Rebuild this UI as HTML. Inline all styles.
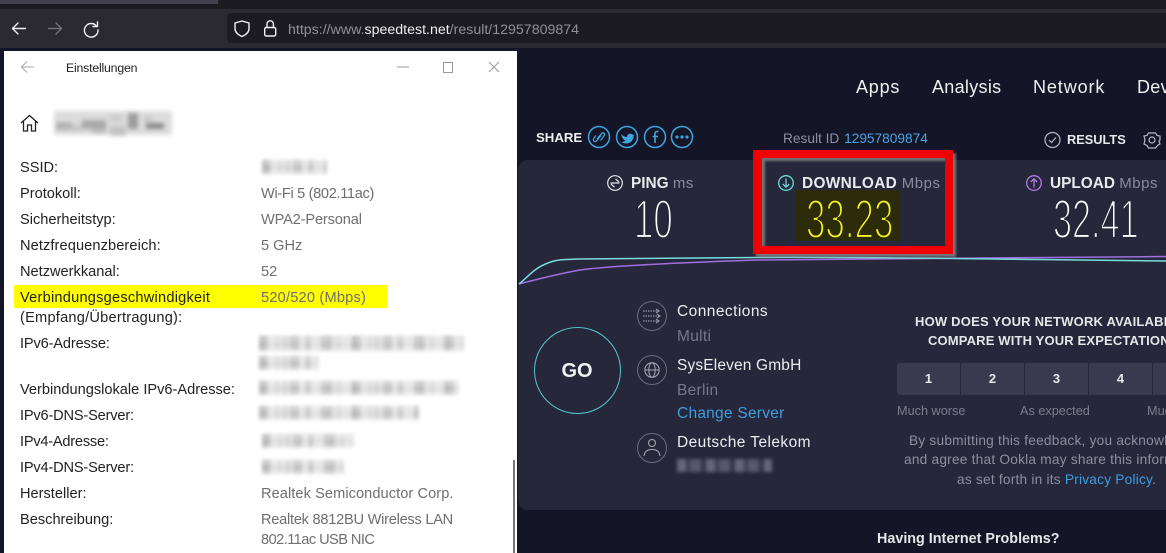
<!DOCTYPE html>
<html lang="de"><head><meta charset="utf-8"><title>Speedtest</title>
<style>
html,body{margin:0;padding:0;width:1166px;height:553px;overflow:hidden;background:#141526;font-family:"Liberation Sans",sans-serif}
.a{position:absolute;white-space:nowrap}
#stage{position:relative;width:1166px;height:553px;overflow:hidden}
.l{position:absolute;left:20px;font-size:14.6px;color:#222;line-height:18px;white-space:nowrap}
.v{position:absolute;left:261px;font-size:14.6px;color:#6f6f6f;line-height:18px;white-space:nowrap}
.b{position:absolute;filter:blur(1.800px);background:repeating-linear-gradient(0deg,rgba(255,255,255,.3) 0 4px,transparent 4px 9px),repeating-linear-gradient(90deg,rgba(0,0,0,.14) 0 9px,transparent 9px 16px,rgba(0,0,0,.06) 16px 20px,transparent 20px 31px),repeating-linear-gradient(90deg,rgba(0,0,0,.07) 0 6px,transparent 6px 23px),#e2e2e2}
.n{font-size:18px;color:#f0f0f2;top:77px}
.big{position:absolute;font-size:55px;line-height:55px;transform:scaleX(.635);transform-origin:0 0;white-space:nowrap}
.ml{position:absolute;font-size:15.500px;line-height:18px;white-space:nowrap}
.h{font-weight:bold;font-size:15.400px;color:#e9e9ee}
.u{font-weight:normal;font-size:15px;letter-spacing:.5px;color:#8b8b9e}
.s{position:absolute;top:363px;width:63px;height:32px;background:#3a3a4e;color:#e6e6ea;font-size:13px;font-weight:bold;line-height:32px;text-align:center}
.c{position:absolute;font-size:13.7px;letter-spacing:.22px;color:#8e8e9e;white-space:nowrap;line-height:18px}
</style></head><body><div id="stage">

<!-- browser chrome -->
<div class="a" style="left:0;top:0;width:1166px;height:9px;background:#1c1b22"></div>
<div class="a" style="left:0;top:0;width:218px;height:4px;background:#42414d"></div>
<div class="a" style="left:0;top:9px;width:1166px;height:39px;background:#2b2a33"></div>
<div class="a" style="left:227px;top:13px;width:939px;height:30px;background:#1c1b22;border-radius:4px 0 0 4px"></div>
<svg class="a" style="left:0;top:0" width="300" height="50" fill="none" stroke-linecap="round" stroke-linejoin="round">
<path d="M25.500 28.500H12.500M18 23L12.500 28.500L18 34" stroke="#f2f2f4" stroke-width="1.400"/>
<path d="M61.500 28.500H48.500M56 23L61.500 28.500L56 34" stroke="#77767f" stroke-width="1.300"/>
<path d="M96 25.500A6.800 6.800 0 1 0 98 30" stroke="#f2f2f4" stroke-width="1.400"/><path d="M97.500 22V26.500H93" stroke="#f2f2f4" stroke-width="1.400"/>
<path d="M242 21L249 23V28.500C249 32.500 245.500 35 242 36.500C238.500 35 235 32.500 235 28.500V23Z" stroke="#f2f2f4" stroke-width="1.400"/>
<rect x="264.700" y="27.500" width="11" height="8.500" rx="1.500" stroke="#f2f2f4" stroke-width="1.400"/><path d="M267 27.500V24A3.200 3.200 0 0 1 273.400 24V27.500" stroke="#f2f2f4" stroke-width="1.400"/>
</svg>
<div class="a" style="left:288px;top:21px;font-size:14.2px;line-height:18px;color:#8f8f96">https://www.<span style="color:#eee">speedtest.net</span>/result/12957809874</div>

<!-- speedtest nav -->
<div class="a n" style="left:856px;letter-spacing:.8px">Apps</div>
<div class="a n" style="left:932px;letter-spacing:.3px">Analysis</div>
<div class="a n" style="left:1033px;letter-spacing:.9px">Network</div>
<div class="a n" style="left:1137px;letter-spacing:.3px">Developers</div>

<div class="a" style="left:536px;top:129px;font-size:13.200px;font-weight:bold;line-height:17px;color:#eee">SHARE</div>
<svg class="a" style="left:586px;top:124px" width="110" height="26" fill="none" stroke="#3ea5e0" stroke-width="1.500">
<circle cx="13" cy="13" r="10.500"/><circle cx="41" cy="13" r="10.500"/><circle cx="69" cy="13" r="10.500"/><circle cx="96" cy="13" r="10.500"/>
<path d="M11 15L15.500 9.500C17.500 7.500 19.500 10 18 12L14.500 16.500M15 11.500L10.500 17C8.500 18.500 6.500 16.500 8 14L10 11.500" stroke-width="1.200"/>
<path d="M35 10C37 12 39 13 41 13C41 9.500 45 8.500 47 11L48.500 10.500L47.500 12.500C47.500 16.500 44 19.500 40.500 19.500C38.500 19.500 36.500 19 35 18C37 18 38.500 17.500 39.500 16.500C37.500 16 36 14 35 10Z" fill="#3ea5e0" stroke="none"/>
<path d="M72.500 7.500H71C69.500 7.500 69 8.500 69 10V19M66.500 12.500H72" stroke-width="1.600"/>
<circle cx="91" cy="13" r="1.600" fill="#3ea5e0" stroke="none"/><circle cx="96" cy="13" r="1.600" fill="#3ea5e0" stroke="none"/><circle cx="101" cy="13" r="1.600" fill="#3ea5e0" stroke="none"/>
</svg>
<div class="a" style="left:783px;top:130px;font-size:13.700px;line-height:17px;color:#8e8e9e">Result ID <span style="color:#4aa3e6;margin-left:1px">12957809874</span></div>
<svg class="a" style="left:1043px;top:130px" width="123" height="22" fill="none" stroke="#b9b9c3" stroke-width="1.200">
<circle cx="9.500" cy="10" r="7.500"/><path d="M6 10L8.500 12.500L13 7.500"/>
<circle cx="109" cy="10" r="3"/><path d="M105.500 3H112.500L114 5.500L117 6L117 10L116 11L117 14L114.500 15.500L112.500 18H105.500L104 15.500L101 14L102 10L101 6L104 5.500Z"/>
</svg>
<div class="a" style="left:1067px;top:131px;font-size:12.800px;font-weight:bold;line-height:17px;color:#e8e8ec">RESULTS</div>

<!-- panel -->
<div class="a" style="left:518px;top:160px;width:648px;height:350px;background:#26273a;border-radius:10px 0 0 10px"></div>

<!-- metrics -->
<svg class="a" style="left:605px;top:173px" width="20" height="20" fill="none" stroke="#e6e6ea" stroke-width="1.200"><circle cx="10" cy="10" r="7.300"/><path d="M5.500 10H14.500M14 9L10.500 5.800M6 11L9.500 14.200"/></svg>
<div class="a h" style="left:631px;top:175px;line-height:18px">PING <span class="u">ms</span></div>
<div class="big" style="left:634px;top:192px;color:#fff;-webkit-text-stroke:2.200px #26273a">10</div>

<svg class="a" style="left:776px;top:173px" width="20" height="20" fill="none" stroke="#69dbd9" stroke-width="1.300"><circle cx="10" cy="10" r="7.300"/><path d="M10 5.500V14M6.800 11L10 14.200L13.200 11"/></svg>
<div class="a h" style="left:802px;top:175px;line-height:18px;letter-spacing:.35px">DOWNLOAD <span class="u">Mbps</span></div>
<div class="a" style="left:796px;top:190px;width:103px;height:51px;background:#2c2b0a"></div>
<div class="big" style="left:806px;top:192px;color:#f5f51e;-webkit-text-stroke:2.200px #2c2b0a">33.23</div>

<svg class="a" style="left:1024px;top:173px" width="20" height="20" fill="none" stroke="#b37de8" stroke-width="1.300"><circle cx="10" cy="10" r="7.300"/><path d="M10 14.500V6M6.800 9L10 5.800L13.200 9"/></svg>
<div class="a h" style="left:1050px;top:175px;line-height:18px">UPLOAD <span class="u">Mbps</span></div>
<div class="big" style="left:1053px;top:192px;color:#fff;-webkit-text-stroke:2.200px #26273a;transform:scaleX(.622)">32.41</div>

<!-- graph -->
<svg class="a" style="left:518px;top:250px" width="648" height="40" fill="none" stroke-width="1.500">
<path d="M1 34C20 29 40 24 62 20C90 16 150 13 240 10C300 9 400 8 648 6.500" stroke="#a06ee0"/>
<path d="M1 34C10 27 16 18 30 13C38 9.500 45 9.500 60 9C120 8 180 7.500 240 7.500C340 7 430 8.500 520 9.500C570 10 610 10.500 648 11" stroke="#78dcdc"/>
</svg>

<!-- red box -->
<div class="a" style="left:753px;top:150px;width:183px;height:88px;border-style:solid;border-color:#f00000;border-width:8px 8px 8px 9px;box-shadow:3px 3px 2px rgba(150,150,150,.7),inset 3px 3px 2px rgba(150,150,150,.7)"></div>

<!-- GO -->
<div class="a" style="left:534px;top:327px;width:85px;height:85px;border:1.300px solid #55c8cc;border-radius:50%;box-sizing:content-box"></div>
<div class="a" style="left:534px;top:359px;width:86px;text-align:center;font-size:20px;font-weight:bold;line-height:24px;color:#f2f2f4">GO</div>

<!-- server info -->
<svg class="a" style="left:636px;top:300px" width="34" height="170" fill="none" stroke="#6b6b7c" stroke-width="1">
<circle cx="16" cy="16" r="14.500"/><circle cx="16" cy="70" r="14.500"/><circle cx="16" cy="148" r="14.500"/>
<path d="M7 11H22M7 16H23M7 21H22" stroke="#a9a9b6" stroke-dasharray="1.500 1"/><path d="M20 9L23 11L20 13M21 14L24 16L21 18M20 19L23 21L20 23" stroke="#a9a9b6"/>
<circle cx="16" cy="70" r="7.200" stroke="#a9a9b6"/><ellipse cx="16" cy="70" rx="3.200" ry="7.200" stroke="#a9a9b6"/><path d="M9 70H23" stroke="#a9a9b6"/>
<circle cx="16" cy="143" r="3.500" stroke="#a9a9b6"/><path d="M8 156C8.500 151 12 149.500 16 149.500C20 149.500 23.500 151 24 156" stroke="#a9a9b6"/>
</svg>
<div class="ml" style="left:677px;top:303px;letter-spacing:.45px;color:#ececf0">Connections</div>
<div class="ml" style="left:677px;top:328px;letter-spacing:.3px;color:#77778a">Multi</div>
<div class="ml" style="left:677px;top:357px;letter-spacing:.15px;color:#ececf0">SysEleven GmbH</div>
<div class="ml" style="left:677px;top:382px;letter-spacing:.3px;color:#77778a">Berlin</div>
<div class="ml" style="left:677px;top:405px;letter-spacing:.25px;color:#3e9ee0">Change Server</div>
<div class="ml" style="left:677px;top:434px;letter-spacing:.42px;color:#ececf0">Deutsche Telekom</div>
<div class="a" style="left:677px;top:459px;width:95px;height:13px;filter:blur(1.800px);background:repeating-linear-gradient(90deg,#66667a 0 9px,#3e3e52 9px 13px,#58586c 13px 24px,#34344a 24px 29px)"></div>

<!-- feedback -->
<div class="a" style="left:915px;top:313px;font-size:13px;letter-spacing:.2px;font-weight:bold;line-height:17px;color:#e6e6ea">HOW DOES YOUR NETWORK AVAILABILITY</div>
<div class="a" style="left:928px;top:332px;font-size:13px;letter-spacing:.15px;font-weight:bold;line-height:17px;color:#e6e6ea">COMPARE WITH YOUR EXPECTATIONS?</div>
<div class="s" style="left:897px;border-radius:3px 0 0 3px">1</div>
<div class="s" style="left:961px">2</div>
<div class="s" style="left:1025px">3</div>
<div class="s" style="left:1089px">4</div>
<div class="s" style="left:1153px">5</div>
<div class="c" style="left:897px;top:402px;font-size:12.700px;letter-spacing:0;color:#7d7d8e">Much worse</div>
<div class="c" style="left:1020px;top:402px;font-size:12.700px;letter-spacing:0;color:#7d7d8e">As expected</div>
<div class="c" style="left:1147px;top:402px;font-size:12.700px;letter-spacing:0;color:#7d7d8e">Much better</div>
<div class="c" style="left:909px;top:432px">By submitting this feedback, you acknowledge</div>
<div class="c" style="left:904px;top:451px">and agree that Ookla may share this information</div>
<div class="c" style="left:957px;top:471px">as set forth in its <span style="color:#3e9ee0">Privacy Policy</span>.</div>
<div class="a" style="left:877px;top:531px;font-size:14.350px;font-weight:bold;line-height:17px;color:#e6e6ea">Having Internet Problems?</div>

<!-- settings window -->
<div class="a" style="left:4px;top:51px;width:513px;height:502px;background:#fff"></div>
<svg class="a" style="left:4px;top:51px" width="513" height="100" fill="none" stroke-width="1">
<path d="M30 16H18M23 10.500L17.500 16L23 21.500" stroke="#a5a5a5"/>
<path d="M393 16H405" stroke="#999"/>
<rect x="439.500" y="11.500" width="9" height="10" stroke="#999"/>
<path d="M485 11L495 21M495 11L485 21" stroke="#999"/>
<path d="M17 72L25.500 64.500L34 72M19.500 70V80H23.500V74H27.500V80H31.500V70" stroke="#222" stroke-width="1.300"/>
</svg>
<div class="a" style="left:66px;top:60px;font-size:12.300px;letter-spacing:-.2px;line-height:16px;color:#222">Einstellungen</div>
<svg class="a" style="left:46px;top:104px;filter:blur(2.200px)" width="136" height="38">
<rect x="8" y="7" width="118" height="24" fill="#dcdcdc"/>
<rect x="10" y="18" width="16" height="8" fill="#b4b4b4"/><rect x="26" y="21" width="10" height="6" fill="#c6c6c6"/>
<rect x="36" y="16" width="24" height="9" fill="#a9a9a9"/><rect x="46" y="25" width="14" height="5" fill="#c2c2c2"/>
<rect x="64" y="11" width="12" height="6" fill="#cbcbcb"/><rect x="64" y="22" width="16" height="10" fill="#c4c4c4"/>
<rect x="82" y="9" width="10" height="16" fill="#9c9c9c"/>
<rect x="98" y="12" width="8" height="6" fill="#c8c8c8"/><rect x="100" y="19" width="18" height="6" fill="#8c8c8c"/>
</svg>

<div class="a" style="left:14px;top:285px;width:373px;height:23px;background:#ffff00"></div>

<div class="l" style="top:159px">SSID:</div><div class="b" style="left:262px;top:160px;width:65px;height:14px"></div>
<div class="l" style="top:185px">Protokoll:</div><div class="v" style="top:185px;letter-spacing:-.33px">Wi-Fi 5 (802.11ac)</div>
<div class="l" style="top:211px">Sicherheitstyp:</div><div class="v" style="top:211px;letter-spacing:-.15px">WPA2-Personal</div>
<div class="l" style="top:237px;letter-spacing:.1px">Netzfrequenzbereich:</div><div class="v" style="top:237px">5 GHz</div>
<div class="l" style="top:263px">Netzwerkkanal:</div><div class="v" style="top:263px">52</div>
<div class="l" style="top:289px;letter-spacing:.23px">Verbindungsgeschwindigkeit</div><div class="v" style="top:289px;letter-spacing:.2px">520/520 (Mbps)</div>
<div class="l" style="top:309px;letter-spacing:.23px">(Empfang/Übertragung):</div>
<div class="l" style="top:335px;letter-spacing:-.15px">IPv6-Adresse:</div><div class="b" style="left:259px;top:336px;width:205px;height:15px"></div><div class="b" style="left:259px;top:356px;width:60px;height:14px"></div>
<div class="l" style="top:381px">Verbindungslokale IPv6-Adresse:</div><div class="b" style="left:259px;top:381px;width:200px;height:14px"></div>
<div class="l" style="top:407px;letter-spacing:-.18px">IPv6-DNS-Server:</div><div class="b" style="left:259px;top:406px;width:160px;height:14px"></div>
<div class="l" style="top:433px;letter-spacing:-.23px">IPv4-Adresse:</div><div class="b" style="left:262px;top:434px;width:92px;height:14px"></div>
<div class="l" style="top:459px;letter-spacing:-.18px">IPv4-DNS-Server:</div><div class="b" style="left:262px;top:460px;width:82px;height:14px"></div>
<div class="l" style="top:485px">Hersteller:</div><div class="v" style="top:485px;letter-spacing:.07px">Realtek Semiconductor Corp.</div>
<div class="l" style="top:511px">Beschreibung:</div><div class="v" style="top:511px;letter-spacing:-.25px">Realtek 8812BU Wireless LAN</div>
<div class="v" style="top:531px;letter-spacing:-.55px">802.11ac USB NIC</div>
<div class="a" style="left:513px;top:460px;width:2px;height:93px;background:#777"></div>

</div></body></html>
